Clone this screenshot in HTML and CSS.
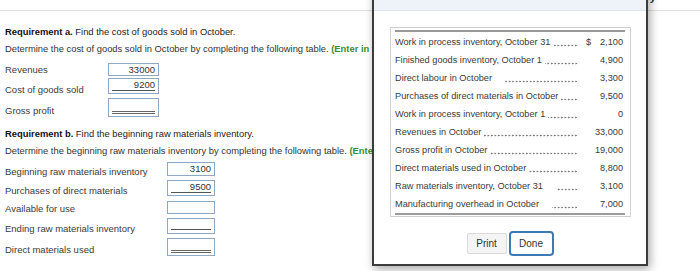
FILE: index.html
```html
<!DOCTYPE html>
<html>
<head>
<meta charset="utf-8">
<link rel="stylesheet" href="styles.css">
</head>
<body>
<div class="topbar"><span class="cut">ry</span></div>
<div class="page">
  <p class="req"><b>Requirement a.</b> Find the cost of goods sold in October.</p>
  <p class="det">Determine the cost of goods sold in October by completing the following table. <span class="hint">(Enter in the amounts as whole dollars.)</span></p>
  <div class="rows rows-a">
    <div class="row r-a1"><span class="lbl">Revenues</span><div class="fld fa h13"><span class="val">33000</span></div></div>
    <div class="row r-a2"><span class="lbl">Cost of goods sold</span><div class="fld fa h16"><span class="val">9200</span><span class="ul"></span></div></div>
    <div class="row r-a3"><span class="lbl">Gross profit</span><div class="fld fa h19"><span class="val"></span><span class="ul dbl"></span></div></div>
  </div>
  <p class="req req-b"><b>Requirement b.</b> Find the beginning raw materials inventory.</p>
  <p class="det">Determine the beginning raw materials inventory by completing the following table. <span class="hint">(Enter in the amounts as whole dollars.)</span></p>
  <div class="rows rows-b">
    <div class="row r-b1"><span class="lbl">Beginning raw materials inventory</span><div class="fld fb h14"><span class="val">3100</span></div></div>
    <div class="row r-b2"><span class="lbl">Purchases of direct materials</span><div class="fld fb h16"><span class="val">9500</span><span class="ul"></span></div></div>
    <div class="row r-b3"><span class="lbl">Available for use</span><div class="fld fb h13"><span class="val"></span></div></div>
    <div class="row r-b4"><span class="lbl">Ending raw materials inventory</span><div class="fld fb h16"><span class="val"></span><span class="ul"></span></div></div>
    <div class="row r-b5"><span class="lbl">Direct materials used</span><div class="fld fb h18"><span class="val"></span><span class="ul dbl"></span></div></div>
  </div>
</div>

<div class="modal">
  <div class="mhead"></div>
  <div class="panel">
    <div class="line"></div>
    <div class="mrow"><span class="mlbl">Work in process inventory, October 31</span><span class="dots"></span><span class="cur">$</span><span class="amt">2,100</span></div>
    <div class="mrow"><span class="mlbl">Finished goods inventory, October 1</span><span class="dots"></span><span class="cur"></span><span class="amt">4,900</span></div>
    <div class="mrow"><span class="mlbl">Direct labour in October</span><span class="dots gap"></span><span class="cur"></span><span class="amt">3,300</span></div>
    <div class="mrow"><span class="mlbl">Purchases of direct materials in October</span><span class="dots"></span><span class="cur"></span><span class="amt">9,500</span></div>
    <div class="mrow"><span class="mlbl">Work in process inventory, October 1</span><span class="dots"></span><span class="cur"></span><span class="amt">0</span></div>
    <div class="mrow"><span class="mlbl">Revenues in October</span><span class="dots"></span><span class="cur"></span><span class="amt">33,000</span></div>
    <div class="mrow"><span class="mlbl">Gross profit in October</span><span class="dots"></span><span class="cur"></span><span class="amt">19,000</span></div>
    <div class="mrow"><span class="mlbl">Direct materials used in October</span><span class="dots"></span><span class="cur"></span><span class="amt">8,800</span></div>
    <div class="mrow"><span class="mlbl">Raw materials inventory, October 31</span><span class="dots gap"></span><span class="cur"></span><span class="amt">3,100</span></div>
    <div class="mrow"><span class="mlbl">Manufacturing overhead in October</span><span class="dots gap"></span><span class="cur"></span><span class="amt">7,000</span></div>
    <div class="line"></div>
  </div>
  <div class="btns">
    <button class="btn print">Print</button>
    <button class="btn done">Done</button>
  </div>
</div>
</body>
</html>
```

FILE: styles.css
```css
* { box-sizing: border-box; }
html, body { margin: 0; padding: 0; background: #fff; }
body {
  font-family: "Liberation Sans", Arial, sans-serif;
  font-size: 9.4px;
  color: #333;
  width: 700px;
  height: 271px;
  overflow: hidden;
  position: relative;
}
.topbar {
  height: 11px;
  border-bottom: 1px solid #e2e2e2;
  overflow: hidden;
  display: flex;
  justify-content: flex-end;
  padding-right: 44px;
}
.cut {
  font-size: 11px;
  font-weight: bold;
  color: #333;
  line-height: 11px;
  margin-top: -8px;
}
.page { padding: 0 5px; }
p { margin: 0; line-height: 13px; white-space: nowrap; }
.req { margin-top: 14px; color: #222; }
.req b { color: #111; }
.det { margin-top: 4px; color: #333; }
.hint { color: #3d8b2f; font-weight: bold; }
.req-b { margin-top: 10px; }
.rows-a { margin-top: 8px; }
.rows-b { margin-top: 5px; }
.row { display: flex; align-items: flex-start; }
.lbl { line-height: 13px; color: #3a3a3a; white-space: nowrap; font-size: 9.5px; }
.rows-a .lbl { width: 103px; }
.rows-b .lbl { width: 162px; }
.r-a1 { height: 15px; }
.r-a2 { height: 20px; }
.r-a2 .lbl { margin-top: 5px; }
.r-a3 { height: 19px; }
.r-a3 .lbl { margin-top: 6px; }
.r-b1 { height: 18px; }
.r-b1 .lbl { margin-top: 3px; }
.r-b2 { height: 21px; }
.r-b2 .lbl { margin-top: 4px; }
.r-b3 { height: 17px; }
.r-b3 .lbl { margin-top: 1px; }
.r-b4 { height: 20px; }
.r-b4 .lbl { margin-top: 4px; }
.r-b5 { height: 18px; }
.r-b5 .lbl { margin-top: 5px; }
.fld {
  border: 1px solid #8ea8c4;
  background: #fff;
  display: flex;
  flex-direction: column;
}
.fa { width: 51px; }
.fb { width: 48px; }
.h13 { height: 13px; }
.h14 { height: 14px; }
.h16 { height: 16px; }
.h18 { height: 18px; }
.h19 { height: 19px; }
.val {
  text-align: right;
  padding-right: 3px;
  font-size: 9.5px;
  line-height: 11px;
  height: 11px;
  color: #333;
}
.ul {
  margin: auto 3px 3px;
  border-top: 1px solid #555;
}
.ul.dbl {
  border-top: 3px double #666;
  margin-bottom: 2px;
}

.modal {
  position: absolute;
  left: 372px;
  top: -12px;
  width: 276px;
  height: 278px;
  border: 2px solid #3c3c3c;
  background: #fff;
  box-shadow: 2px 3px 9px rgba(0, 0, 0, 0.35);
  z-index: 2;
  display: flex;
  flex-direction: column;
  font-size: 9.2px;
}
.mhead {
  height: 21px;
  background: #eef2f9;
  border-bottom: 1px solid #dde3ec;
}
.panel {
  margin: 16px 15px 0 16px;
  border: 1px solid #cfcfcf;
  padding: 2px 5px 1px 4px;
}
.line { height: 2px; background: #9a9a9a; }
.panel .line:first-child { margin-bottom: 1px; }
.mrow {
  display: flex;
  align-items: center;
  height: 18px;
  color: #3a3a3a;
  white-space: nowrap;
}
.mlbl { flex: none; }
.dots {
  flex: 1;
  min-width: 0;
  height: 3px;
  margin: 6px 3px 0 3px;
  background-image: radial-gradient(circle at 1.5px 1.5px, #7a7a7a 0.8px, transparent 1.1px);
  background-size: 3.5px 3px;
  background-repeat: repeat-x;
  background-position: right center;
}
.dots.gap { margin-left: 13px; }
.cur { width: 10px; padding-left: 5px; flex: none; }
.amt { width: 34px; text-align: right; padding-right: 2px; flex: none; }
.btns {
  margin-top: 14px;
  display: flex;
  justify-content: center;
  align-items: center;
  gap: 2px;
}
.btn {
  font-family: "Liberation Sans", Arial, sans-serif;
  font-size: 10px;
  color: #333;
  background: #f4f4f4;
  border: 1px solid #dadada;
  border-radius: 2px;
  padding: 0;
  margin: 0;
}
.print { width: 40px; height: 21px; }
.done {
  width: 45px;
  height: 25px;
  background: #fff;
  border: 2px solid #3e78b5;
  border-radius: 4px;
}
```
